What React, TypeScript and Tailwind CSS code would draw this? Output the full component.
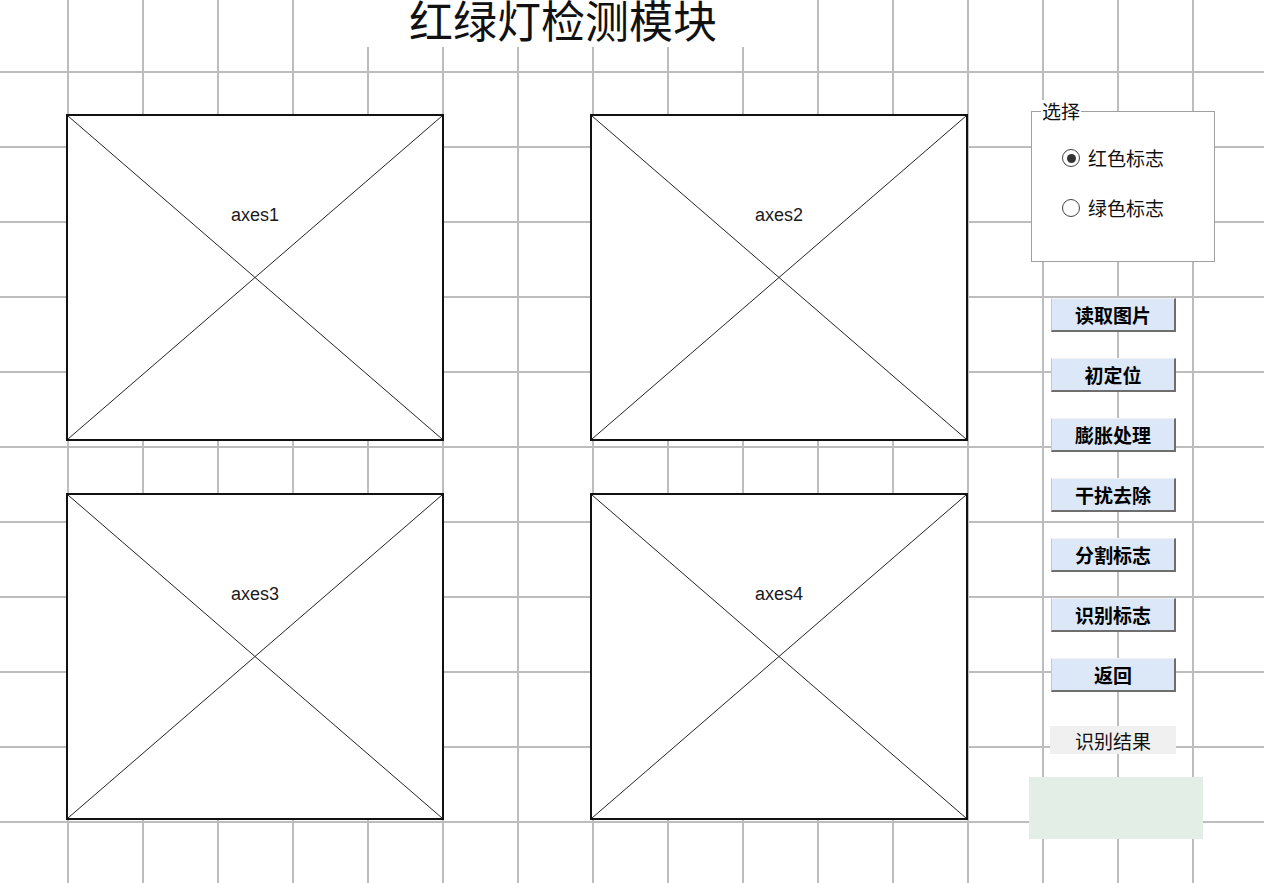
import React from 'react'

const cjk = "font-['Noto_Sans_CJK_SC','Noto_Sans',sans-serif]"

const Axes = ({ label }: { label: string }) => (
  <div className="relative w-[378px] h-[327px] border-2 border-[#111] bg-white">
    <svg className="absolute inset-0 w-full h-full" viewBox="0 0 100 100" preserveAspectRatio="none">
      <line x1="0" y1="0" x2="100" y2="100" stroke="#222" strokeWidth="1" vectorEffect="non-scaling-stroke" />
      <line x1="100" y1="0" x2="0" y2="100" stroke="#222" strokeWidth="1" vectorEffect="non-scaling-stroke" />
    </svg>
    <div className="relative pt-[89px] text-center text-[18px] leading-[20px] text-[#1a1a1a] font-['Liberation_Sans',Arial,sans-serif]">
      {label}
    </div>
  </div>
)

const Radio = ({ checked, label }: { checked?: boolean; label: string }) => (
  <div className="flex items-center h-[24px]">
    <span className="w-[18px] h-[18px] rounded-full border-[1.5px] border-[#444] bg-white flex items-center justify-center">
      {checked && <span className="w-[9px] h-[9px] rounded-full bg-[#333]" />}
    </span>
    <span className={`ml-[8px] text-[19px] leading-[24px] text-[#111] ${cjk}`}>{label}</span>
  </div>
)

const Btn = ({ text }: { text: string }) => (
  <button
    type="button"
    className={`w-[125px] h-[34px] bg-[#dce8f8] border-t border-l border-t-[#f2f2f2] border-l-[#c8c8c8] border-r-2 border-b-2 border-r-[#6e6e6e] border-b-[#6e6e6e] text-[19px] font-bold leading-none text-black ${cjk}`}
  >
    {text}
  </button>
)

const buttons = ['读取图片', '初定位', '膨胀处理', '干扰去除', '分割标志', '识别标志', '返回']

export default function App() {
  return (
    <div className="w-[1264px] h-[883px] overflow-hidden bg-white bg-[linear-gradient(to_right,#bdbdbd_2px,transparent_2px),linear-gradient(to_bottom,#bdbdbd_2px,transparent_2px)] bg-[size:75px_75px] bg-[position:67px_71px]">
      <div className="ml-[328px] w-[470px] h-[47px] bg-white flex justify-center items-start">
        <h1 className={`text-[44px] leading-[38px] text-[#111] font-normal ${cjk}`}>红绿灯检测模块</h1>
      </div>

      <div className="flex items-start">
        <div className="ml-[66px] mt-[67px] grid grid-cols-[378px_378px] gap-x-[146px] gap-y-[52px]">
          <Axes label="axes1" />
          <Axes label="axes2" />
          <Axes label="axes3" />
          <Axes label="axes4" />
        </div>

        <div className="ml-[61px] mt-[64px] flex flex-col items-start">
          <div className="relative ml-[2px] w-[184px] h-[151px] border border-[#a0a0a0] bg-white">
            <span className={`absolute left-[9px] -top-[12px] bg-white px-[1px] text-[19px] leading-[22px] text-[#111] ${cjk}`}>
              选择
            </span>
            <div className="pl-[30px] pt-[34px] flex flex-col gap-[26px]">
              <Radio checked label="红色标志" />
              <Radio label="绿色标志" />
            </div>
          </div>

          <div className="ml-[22px] mt-[36px] flex flex-col gap-[26px]">
            {buttons.map((b) => (
              <Btn key={b} text={b} />
            ))}
          </div>

          <div className={`ml-[21px] mt-[34px] w-[126px] h-[28px] bg-[#f0f0f0] flex items-center justify-center text-[19px] leading-none text-[#111] ${cjk}`}>
            识别结果
          </div>

          <div className="mt-[23px] w-[174px] h-[62px] bg-[#e3efe6]" />
        </div>
      </div>
    </div>
  )
}
